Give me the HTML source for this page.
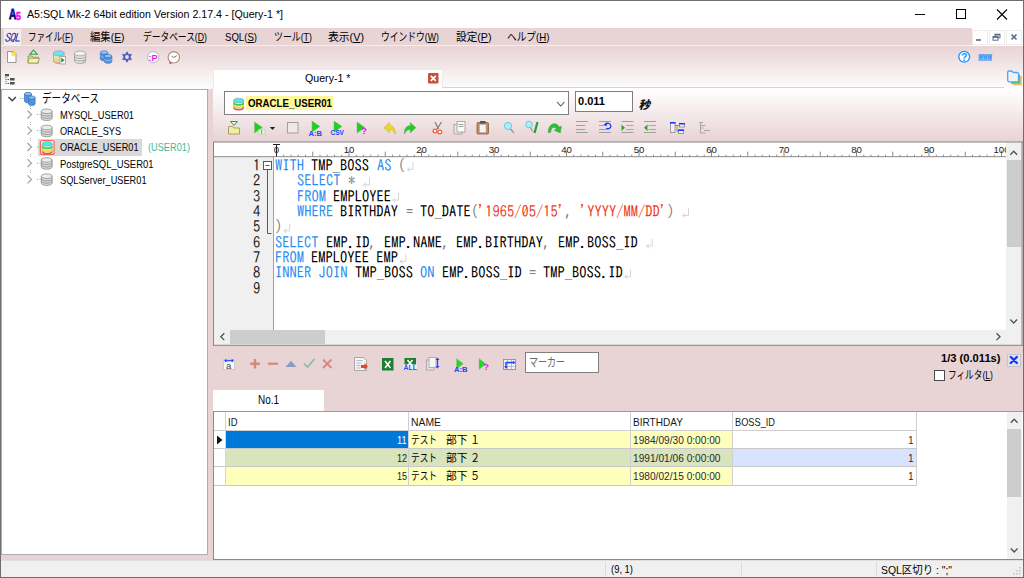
<!DOCTYPE html>
<html lang="ja">
<head>
<meta charset="utf-8">
<title>A5:SQL Mk-2</title>
<style>
*{box-sizing:border-box;margin:0;padding:0}
html,body{width:1024px;height:578px;overflow:hidden;background:#fff}
body{position:relative;font-family:"Liberation Sans","Noto Sans CJK JP",sans-serif;font-size:12px;color:#000}
.a{position:absolute}
.t{position:absolute;white-space:nowrap;line-height:16px;height:16px;font-size:12px}
svg{position:absolute;overflow:visible}
.ui{font-family:"Liberation Sans","Noto Sans CJK JP",sans-serif;margin-top:.8px}
.mono{font-family:"IPAGothic","Liberation Mono",monospace}
.c{font-size:15.600px;line-height:15px;height:15px;transform:scaleX(.9295);transform-origin:0 0}
u{text-decoration:underline;text-underline-offset:1px}
#win{left:0;top:0;width:1024px;height:578px;border:1px solid #6e6e6e;z-index:50;pointer-events:none}
#title{left:1px;top:1px;width:1022px;height:27px;background:#fff}
#menu{left:1px;top:28px;width:1022px;height:18px;background:#e8d3d5;border-bottom:1px solid #f6eeee}
#tool{left:1px;top:46px;width:1022px;height:43px;background:linear-gradient(#e8d3d5,#fefdfd)}
#main{left:1px;top:89px;width:1022px;height:471px;background:#e8d3d5}
#status{left:1px;top:560px;width:1022px;height:17px;background:#f0f0f0}
#tree{left:1px;top:89px;width:207px;height:466px;background:#fff;border:1px solid #a9adb6}
</style>
</head>
<body>
<div class="a" id="title"></div>
<div class="a" id="menu"></div>
<div class="a" id="tool"></div>
<div class="a" id="main"></div>
<div class="a" id="status"></div>
<div class="a" id="tree"></div>
<!-- title bar -->
<svg class="a" style="left:8px;top:7px" width="14" height="14" viewBox="0 0 14 14">
 <defs><linearGradient id="ga" x1="0" y1="0" x2="0" y2="1"><stop offset="0" stop-color="#0808ff"/><stop offset=".45" stop-color="#0a14c0"/><stop offset="1" stop-color="#000"/></linearGradient></defs>
 <text x=".9" y="11.800" font-family="Liberation Sans" font-weight="bold" font-size="15.400" fill="url(#ga)" stroke="url(#ga)" stroke-width=".9" textLength="7.300" lengthAdjust="spacingAndGlyphs">A</text>
 <text x="8" y="12.600" font-family="Liberation Sans" font-weight="bold" font-size="10.600" fill="#f010f0" stroke="#f010f0" stroke-width=".6" textLength="4.900" lengthAdjust="spacingAndGlyphs">5</text>
</svg>
<span class="t f sx" id="t_title" style="left:27px;top:5.800px;font-size:10.800px;color:#000;transform:scaleX(0.9866);transform-origin:0 0;">A5:SQL Mk-2 64bit edition Version 2.17.4 - [Query-1 *]</span>
<svg class="a" style="left:900px;top:1px" width="123" height="27" viewBox="0 0 123 27" fill="none" stroke="#000" stroke-width="1">
 <path d="M15 13.5h10"/>
 <rect x="56.5" y="8.5" width="9" height="9"/>
 <path d="M97 8.5l10 10M107 8.5l-10 10" stroke-width="1.1"/>
</svg>
<!-- menu bar -->
<div class="a" style="left:4px;top:29px;width:17px;height:16px;background:#f3eff0"></div>
<span class="t mono f" id="t_sqlico" style="left:4px;top:29px;font-size:12px;font-style:italic;color:#2a2aa8;letter-spacing:-1.000px;">SQL</span>
<span class="t ui f sx" id="m1" style="left:28px;top:28.300px;font-size:11.500px;transform:scaleX(0.7411);transform-origin:0 0;">ファイル(<u>F</u>)</span>
<span class="t ui f sx" id="m2" style="left:89.5px;top:28.300px;font-size:11.500px;transform:scaleX(0.8994);transform-origin:0 0;">編集(<u>E</u>)</span>
<span class="t ui f sx" id="m3" style="left:143px;top:28.300px;font-size:11.500px;transform:scaleX(0.7581);transform-origin:0 0;">データベース(<u>D</u>)</span>
<span class="t ui f sx" id="m4" style="left:225px;top:28.300px;font-size:11.500px;transform:scaleX(0.8342);transform-origin:0 0;">SQL(<u>S</u>)</span>
<span class="t ui f sx" id="m5" style="left:274px;top:28.300px;font-size:11.500px;transform:scaleX(0.7721);transform-origin:0 0;">ツール(<u>T</u>)</span>
<span class="t ui f sx" id="m6" style="left:328px;top:28.300px;font-size:11.500px;transform:scaleX(0.9385);transform-origin:0 0;">表示(<u>V</u>)</span>
<span class="t ui f sx" id="m7" style="left:380.5px;top:28.300px;font-size:11.500px;transform:scaleX(0.7627);transform-origin:0 0;">ウインドウ(<u>W</u>)</span>
<span class="t ui f sx" id="m8" style="left:455.5px;top:28.300px;font-size:11.500px;transform:scaleX(0.9255);transform-origin:0 0;">設定(<u>P</u>)</span>
<span class="t ui f sx" id="m9" style="left:506.5px;top:28.300px;font-size:11.500px;transform:scaleX(0.8416);transform-origin:0 0;">ヘルプ(<u>H</u>)</span>
<!-- MDI buttons -->
<div class="a" style="left:972px;top:28px;width:51px;height:17.500px;background:#fff"></div>
<div class="a" style="left:972px;top:30px;width:16px;height:15px;border:1px solid #f0eaea;background:#fff"></div>
<div class="a" style="left:989px;top:30px;width:16px;height:15px;border:1px solid #f0eaea;background:#fff"></div>
<div class="a" style="left:1006px;top:30px;width:16px;height:15px;border:1px solid #f0eaea;background:#fff"></div>
<svg class="a" style="left:971px;top:29px" width="52" height="17" viewBox="0 0 52 17" fill="none" stroke="#5a6b8c">
 <path d="M5 11h5" stroke-width="1.6"/>
 <rect x="24" y="5.2" width="5" height="3.6" stroke-width="1"/><path d="M24 5.8h5" stroke-width="1.4"/>
 <rect x="22" y="7.6" width="5" height="3.6" fill="#fff" stroke-width="1"/><path d="M22 8.2h5" stroke-width="1.4"/>
 <path d="M40.5 5.5l5 5M45.5 5.5l-5 5" stroke-width="1.7"/>
</svg>
<!-- main toolbar icons -->
<svg class="a" style="left:0;top:46px" width="200" height="44" viewBox="0 46 200 44">
 <!-- new doc -->
 <path d="M7.500 51.500h6l2.500 2.500v8.500h-8.500z" fill="#fdfdfd" stroke="#8e8e8e" stroke-width=".9"/>
 <path d="M13.800 50.800l.9 1.700 1.900.3-1.400 1.300.3 1.900-1.700-.9-1.700.9.300-1.900-1.400-1.300 1.900-.3z" fill="#ffe640" stroke="#e8c820" stroke-width=".5"/>
 <!-- open -->
 <path d="M28 56h4l1 1.300h5.500v5.700h-10.500z" fill="#e6e27a" stroke="#8a8a60" stroke-width=".8"/>
 <path d="M29.300 58.300h10.200l-1.800 4.700h-9.700z" fill="#f6f3a0" stroke="#8a8a60" stroke-width=".7"/>
 <path d="M29.800 54.300l3.700-4.300 3.700 4.300z" fill="#c8f0c8" stroke="#2ea040" stroke-width="1.100"/>
 <!-- db run -->
 <g>
  <path d="M53.500 53.500v7.500c0 1.400 2.400 2.500 5.300 2.500s5.300-1.100 5.300-2.500v-7.500z" fill="#d6e8b0" stroke="#8a9a8a" stroke-width=".7"/>
  <path d="M53.500 56.500c0 1.400 2.400 2.500 5.300 2.500s5.300-1.100 5.300-2.500v2.500c0 1.400-2.400 2.500-5.300 2.500s-5.300-1.100-5.300-2.500z" fill="#f0d070" opacity=".7"/>
  <path d="M53.500 59.500c0 1.400 2.400 2.500 5.300 2.500s5.300-1.100 5.300-2.500v1.500c0 1.400-2.400 2.500-5.300 2.500s-5.300-1.100-5.300-2.500z" fill="#f0a080" opacity=".7"/>
  <ellipse cx="58.800" cy="53.300" rx="5.300" ry="2.400" fill="#70e4f0" stroke="#80a0a0" stroke-width=".7"/>
  <rect x="60" y="56.500" width="5.500" height="7.500" fill="#f8f8f8" stroke="#909090" stroke-width=".7"/>
  <path d="M61.300 57.800l3.200 2.400-3.200 2.400z" fill="#188a28"/>
 </g>
 <!-- db gray -->
 <g fill="#e4e4e4" stroke="#9c9c9c" stroke-width=".8">
  <path d="M74.500 53.500v7.500c0 1.400 2.500 2.500 5.600 2.500s5.600-1.100 5.600-2.500v-7.500z"/>
  <ellipse cx="80.100" cy="53.500" rx="5.600" ry="2.400" fill="#f4f4f4"/>
  <path d="M74.500 56c0 1.400 2.500 2.500 5.600 2.500s5.600-1.100 5.600-2.500M74.500 58.500c0 1.400 2.500 2.500 5.600 2.500s5.600-1.100 5.600-2.500" fill="none"/>
  <path d="M82 60l3.500 3.500M85.500 60l-3.500 3.500" stroke="#b0b0b0" stroke-width=".8"/>
 </g>
 <!-- db blue pair -->
 <g fill="#4f8fe0" stroke="#3868b0" stroke-width=".6">
  <path d="M100.300 52.500v6.500c0 1 1.700 1.800 3.800 1.800s3.800-.8 3.800-1.800v-6.500z"/><ellipse cx="104.100" cy="52.500" rx="3.800" ry="1.700" fill="#90c4f8"/>
  <path d="M104.300 56v5.500c0 1 1.700 1.800 3.800 1.800s3.800-.8 3.800-1.800v-5.500z"/><ellipse cx="108.100" cy="56" rx="3.800" ry="1.600" fill="#90c4f8"/>
  <path d="M100.300 55.500c0 1 1.700 1.700 3.500 1.700M104.300 59c0 1 1.700 1.700 3.800 1.700s3.800-.7 3.800-1.700" fill="none" stroke="#a8d0f8" stroke-width=".7"/>
 </g>
 <!-- gear -->
 <g transform="translate(127 57)">
  <path d="M0-5.200l1.500 2.600h3l-1.500 2.600 1.500 2.600h-3l-1.500 2.600-1.500-2.600h-3l1.500-2.600-1.500-2.600h3z" fill="#4858b8" stroke="#4858b8" stroke-width=".7"/>
  <circle r="1.900" fill="#f0e2e3"/>
 </g>
 <!-- P -->
 <circle cx="153.200" cy="57.200" r="5.600" fill="#fff" stroke="#b4b4c4" stroke-width="1"/>
 <text x="148.600" y="60.600" font-family="Liberation Sans" font-weight="bold" font-size="9.500" fill="#f018e8" textLength="9" lengthAdjust="spacingAndGlyphs">:P</text>
 <!-- clock -->
 <circle cx="173.800" cy="57.300" r="5.700" fill="#fff" stroke="#b08878" stroke-width="1.100"/>
 <path d="M173.800 57.500l3-1.800M173.800 57.500l-2.300-1.300" stroke="#666" stroke-width=".9" fill="none"/>
 <path d="M169.500 62.800l1.800-.3-.6 1.500z" fill="#c04830" stroke="#c04830" stroke-width=".8"/>
 <!-- tree toolbar icon -->
 <g fill="#505050"><rect x="5" y="74" width="4" height="2.300"/><rect x="10" y="78" width="4.600" height="2.500"/><rect x="10" y="82" width="4.600" height="2.500"/><rect x="5.500" y="77" width="1" height="1"/><rect x="5.500" y="79" width="1" height="1"/><rect x="5.500" y="81" width="1" height="1"/><rect x="5.500" y="83" width="1" height="1"/><rect x="7.500" y="79" width="1.500" height="1"/><rect x="7.500" y="83" width="1.500" height="1"/></g>
</svg>
<!-- right toolbar icons -->
<svg class="a" style="left:950px;top:46px" width="74" height="44" viewBox="950 46 74 44">
 <circle cx="964.200" cy="56.800" r="5.400" fill="#fff" stroke="#1e90ff" stroke-width="1.300"/>
 <text x="961.100" y="60.700" font-family="Liberation Sans" font-weight="bold" font-size="10.500" fill="#1e90ff">?</text>
 <rect x="978.400" y="54.400" width="13.600" height="4.800" fill="#a8d4ff"/>
 <text x="978.400" y="59.300" font-family="Liberation Sans" font-weight="bold" font-size="6.500" fill="#1e80f0" textLength="13.600" lengthAdjust="spacingAndGlyphs">WWW</text>
 <path d="M978.400 60h13.600" stroke="#1e80f0" stroke-width="1"/>
 <!-- corner icon -->
 <path d="M1013 84.500h8v-8.500" stroke="#f0c048" stroke-width="1.600" fill="none"/>
 <path d="M1011 82.800h8.300v-8.300" stroke="#48d060" stroke-width="1.800" fill="none"/>
 <path d="M1007.700 72.500c0-1 .5-1.500 1.500-1.500h2.500l1.500 1.500h3.800c1 0 1.500.5 1.500 1.500v6.300c0 1-.5 1.500-1.500 1.500h-7.800c-1 0-1.500-.5-1.500-1.500z" fill="#f4f0f4" stroke="#48a8f4" stroke-width="1.300"/>
</svg>
<!-- tree -->
<div class="a" style="left:38px;top:139px;width:104px;height:17px;background:#d9d9d9"></div>
<svg class="a" style="left:0;top:89px" width="208" height="110" viewBox="0 89 208 110">
 <defs>
  <g id="dbg">
   <path d="M0 2.300v6.900c0 1.400 2.400 2.300 5.400 2.300s5.400-.9 5.400-2.300v-6.900z" fill="#dadada" stroke="#8c8c8c" stroke-width=".8"/>
   <path d="M0 4.700c0 1.400 2.400 2.300 5.400 2.300s5.400-.9 5.400-2.300M0 7c0 1.400 2.400 2.300 5.400 2.300s5.400-.9 5.400-2.300" fill="none" stroke="#8c8c8c" stroke-width=".8"/>
   <ellipse cx="5.400" cy="2.300" rx="5.400" ry="2.300" fill="#ececec" stroke="#8c8c8c" stroke-width=".8"/>
  </g>
  <path id="chev" d="M0 0l4 4-4 4" fill="none" stroke="#a0a0a0" stroke-width="1.200"/>
 </defs>
 <!-- dotted lines -->
 <g fill="#a8a8a8"><rect x="30" y="106" width="1" height="1"/><rect x="30" y="108" width="1" height="1"/><rect x="30" y="122" width="1" height="1"/><rect x="30" y="124" width="1" height="1"/><rect x="30" y="138" width="1" height="1"/><rect x="30" y="140" width="1" height="1"/><rect x="30" y="154" width="1" height="1"/><rect x="30" y="156" width="1" height="1"/><rect x="30" y="170" width="1" height="1"/><rect x="30" y="172" width="1" height="1"/></g>
 <g stroke="#9a9a9a" stroke-width="1" stroke-dasharray="1 1.500" fill="none">
  <path d="M20 98.500h4M37 114.500h4M37 130.700h4M37 147h4M37 163.200h4M37 179.400h4"/>
 </g>
 <!-- root chevron -->
 <path d="M8.500 97l3.700 3.800 3.700-3.800" fill="none" stroke="#404040" stroke-width="1.400"/>
 <!-- root icon: blue dbs -->
 <g fill="#4f94e0" stroke="#3a6fb8" stroke-width=".7">
  <path d="M24.500 94v7c0 1.100 1.600 1.800 3.500 1.800s3.500-.7 3.500-1.800v-7z"/><ellipse cx="28" cy="94" rx="3.500" ry="1.700" fill="#8fc0f4"/>
  <path d="M28.500 97.500v6.300c0 1 1.500 1.700 3.300 1.700s3.300-.7 3.300-1.700v-6.300z"/><ellipse cx="31.800" cy="97.500" rx="3.300" ry="1.500" fill="#8fc0f4"/>
 </g>
 <use href="#chev" x="27.500" y="110.500"/>
 <use href="#chev" x="27.500" y="126.700"/>
 <use href="#chev" x="27.500" y="143"/>
 <use href="#chev" x="27.500" y="159.200"/>
 <use href="#chev" x="27.500" y="175.400"/>
 <use href="#dbg" x="41.300" y="109"/>
 <use href="#dbg" x="41.300" y="125.200"/>
 <use href="#dbg" x="41.300" y="157.700"/>
 <use href="#dbg" x="41.300" y="173.900"/>
 <!-- selected colorful db -->
 <rect x="40.400" y="140.500" width="13.700" height="14" rx="2" fill="#fff4f0" stroke="#f46a4a" stroke-width="1.200"/>
 <g id="dbc">
  <path d="M42.300 143.800v8c0 1.300 2.200 2.200 4.900 2.200s4.900-.9 4.900-2.200v-8z" fill="#ececec" stroke="#8a8a8a" stroke-width=".7"/>
  <path d="M42.600 146.200c0 1.300 2.100 2.100 4.600 2.100s4.600-.8 4.600-2.100" fill="none" stroke="#38d048" stroke-width="1.800"/>
  <path d="M42.600 148.900c0 1.300 2.100 2.100 4.600 2.100s4.600-.8 4.600-2.100" fill="none" stroke="#f0dc28" stroke-width="1.700"/>
  <path d="M42.600 151.400c0 1.300 2.100 2.100 4.600 2.100s4.600-.8 4.600-2.100" fill="none" stroke="#f05838" stroke-width="1.600"/>
  <ellipse cx="47.200" cy="143.800" rx="4.900" ry="2.300" fill="#48e8f0" stroke="#8aa0a0" stroke-width=".6"/>
 </g>
</svg>
<span class="t ui f sx" id="tr0" style="left:41.500px;top:90.300px;font-size:12.500px;transform:scaleX(0.7662);transform-origin:0 0;">データベース</span>
<span class="t f sx" id="tr1" style="left:59.500px;top:106.80px;font-size:11.600px;transform:scaleX(0.8030);transform-origin:0 0;">MYSQL_USER01</span>
<span class="t f sx" id="tr2" style="left:59.500px;top:123.00px;font-size:11.600px;transform:scaleX(0.7888);transform-origin:0 0;">ORACLE_SYS</span>
<span class="t f sx" id="tr3" style="left:59.500px;top:139.30px;font-size:11.600px;transform:scaleX(0.7911);transform-origin:0 0;">ORACLE_USER01</span>
<span class="t f sx" id="tr3b" style="left:148px;top:139.30px;font-size:11.600px;color:#40b8a0;transform:scaleX(0.7948);transform-origin:0 0;">(USER01)</span>
<span class="t f sx" id="tr4" style="left:59.500px;top:155.50px;font-size:11.600px;transform:scaleX(0.8150);transform-origin:0 0;">PostgreSQL_USER01</span>
<span class="t f sx" id="tr5" style="left:59.500px;top:171.70px;font-size:11.600px;transform:scaleX(0.7943);transform-origin:0 0;">SQLServer_USER01</span>
<!-- query tab + panel -->
<div class="a" style="left:213px;top:87px;width:791px;height:1px;background:#d9d4d4"></div>
<div class="a" style="left:213px;top:88px;width:810px;height:54px;background:linear-gradient(#ffffff 0px,#fefdfd 3px,#e8d3d5 53px)"></div>
<div class="a" style="left:213px;top:69px;width:230px;height:20px;background:#fff;border:1px solid #efe9e9;border-bottom:none"></div>
<span class="t f sx" id="q_tab" style="left:304.500px;top:70.200px;font-size:10.600px;transform:scaleX(1.0034);transform-origin:0 0;">Query-1 *</span>
<svg class="a" style="left:428px;top:73px" width="11" height="11" viewBox="0 0 11 11">
 <rect x="0" y="0" width="10.500" height="10.500" rx="1" fill="#c8503c"/>
 <path d="M2.800 2.800l5 5M7.800 2.800l-5 5" stroke="#fff" stroke-width="1.700" fill="none"/>
</svg>
<!-- combo -->
<div class="a" style="left:224px;top:91px;width:345px;height:24px;background:#fff;border:1px solid #7f7f7f"></div>
<div class="a" style="left:246px;top:96px;width:87px;height:13.500px;background:#fff799"></div>
<svg class="a" style="left:233px;top:97px" width="13" height="14" viewBox="0 0 13 14">
 <path d="M.8 3.500v7.300c0 1.300 2.200 2.200 4.900 2.200s4.900-.9 4.900-2.200v-7.300z" fill="#ececec" stroke="#8a8a8a" stroke-width=".7"/>
 <path d="M1.100 5.700c0 1.300 2.100 2.100 4.600 2.100s4.600-.8 4.600-2.100" fill="none" stroke="#38d048" stroke-width="1.700"/>
 <path d="M1.100 8.200c0 1.300 2.100 2.100 4.600 2.100s4.600-.8 4.600-2.100" fill="none" stroke="#f0dc28" stroke-width="1.600"/>
 <path d="M1.100 10.500c0 1.300 2.100 2.100 4.600 2.100s4.600-.8 4.600-2.100" fill="none" stroke="#f05838" stroke-width="1.500"/>
 <ellipse cx="5.700" cy="3.500" rx="4.900" ry="2.300" fill="#48e8f0" stroke="#8aa0a0" stroke-width=".6"/>
</svg>
<span class="t f sx" id="q_combo" style="left:247.500px;top:94.700px;font-size:10.800px;font-weight:bold;transform:scaleX(0.8973);transform-origin:0 0;">ORACLE_USER01</span>
<svg class="a" style="left:556px;top:101px" width="10" height="7" viewBox="0 0 10 7"><path d="M1 1l3.700 4 3.700-4" fill="none" stroke="#555" stroke-width="1.100"/></svg>
<!-- time box -->
<div class="a" style="left:575px;top:91px;width:58px;height:21px;background:#fff;border:1px solid #7f7f7f"></div>
<span class="t f sx" id="q_time" style="left:578px;top:93.300px;font-size:11px;font-weight:bold;transform:scaleX(1.0029);transform-origin:0 0;">0.011</span>
<span class="t ui" style="left:638.500px;top:96.300px;font-size:11.500px;font-weight:900;font-style:italic;color:#111">秒</span>
<!-- sql toolbar icons -->
<svg class="a" style="left:213px;top:116px" width="520" height="24" viewBox="213 116 520 24">
 <defs>
  <path id="gtri" d="M0 0v11l8-5.500z" fill="#20d020" stroke="#7ab87a" stroke-width=".5"/>
  <g id="lines3" stroke="#a0a0a0" stroke-width="1" fill="none"><path d="M0 .5h12M0 11.500h12"/></g>
 </defs>
 <!-- folder with down arrow -->
 <path d="M228.500 126.500h4l1 1.500h6v6h-11z" fill="#f1ee9c" stroke="#8f8f6a" stroke-width=".8"/>
 <path d="M230.500 121.500h7l-3.500 4z" fill="#e6f7e0" stroke="#2e9e3a" stroke-width="1"/>
 <!-- run -->
 <use href="#gtri" x="254.500" y="122"/>
 <rect x="258.500" y="129.500" width="6.500" height="5" fill="#dff5d8" stroke="#a8c8a0" stroke-width=".5"/><path d="M261.700 130.500v3" stroke="#333" stroke-width="1" stroke-dasharray="1 1"/>
 <path d="M269.800 127h5.400l-2.700 3z" fill="#222"/>
 <rect x="287.500" y="122.500" width="10.500" height="10.500" fill="#f3e8e9" stroke="#a0a0a0" stroke-width="1"/>
 <use href="#gtri" x="312" y="121"/>
 <text x="308.500" y="135.500" font-family="Liberation Sans" font-weight="bold" font-size="7.500" fill="#1848ff" textLength="13.500" lengthAdjust="spacingAndGlyphs">A:B</text>
 <use href="#gtri" x="334" y="121"/>
 <text x="330.500" y="135" font-family="Liberation Sans" font-weight="bold" font-size="7.500" fill="#1848ff" textLength="13.500" lengthAdjust="spacingAndGlyphs">CSV</text>
 <use href="#gtri" x="357" y="122"/>
 <text x="361.300" y="134" font-family="Liberation Sans" font-weight="bold" font-size="9.500" fill="#f010f0">?</text>
 <!-- yellow back arrow -->
 <path d="M384 127.700l5.500-5v3c4.300 0 5.800 3 5.800 8.300-1.300-3.200-2.800-4.600-5.800-4.600v3.300z" fill="#f0d820" stroke="#c8b030" stroke-width=".6"/>
 <!-- green forward arrow -->
 <path d="M415.800 127.700l-5.500-5v3c-4.300 0-5.800 3-5.800 8.300 1.300-3.200 2.800-4.600 5.800-4.600v3.300z" fill="#20d020" stroke="#50a850" stroke-width=".6"/>
 <!-- scissors -->
 <path d="M435 122l3.500 7M441.500 122l-4.500 7" stroke="#777" stroke-width="1.100" fill="none"/>
 <circle cx="435" cy="131" r="1.900" fill="#fff" stroke="#f05a3c" stroke-width="1.200"/><circle cx="439.800" cy="132" r="1.900" fill="#fff" stroke="#f05a3c" stroke-width="1.200"/>
 <!-- copy -->
 <rect x="454" y="124.500" width="8" height="9.500" fill="#e8e8e8" stroke="#9a9a9a" stroke-width=".8"/>
 <rect x="457" y="121.500" width="8" height="10.500" fill="#fafafa" stroke="#9a9a9a" stroke-width=".8"/>
 <path d="M458.500 124.500h5M458.500 126.500h5" stroke="#888" stroke-width=".8"/>
 <!-- paste -->
 <rect x="477" y="122.500" width="11.500" height="11.500" rx="1" fill="#c08a60" stroke="#8a5a3a" stroke-width=".8"/>
 <rect x="479.500" y="124.500" width="6.500" height="8" fill="#f4f4f4" stroke="#aaa" stroke-width=".5"/>
 <rect x="480" y="121" width="5.500" height="2.500" fill="#555"/>
 <!-- search -->
 <circle cx="508" cy="126" r="3.600" fill="#a8f0f8" stroke="#70c8d8" stroke-width="1"/><path d="M510.500 129l3.500 4" stroke="#999" stroke-width="1.400"/>
 <!-- search + pen -->
 <circle cx="529" cy="124.500" r="3.300" fill="#a8f0f8" stroke="#70c8d8" stroke-width="1"/><path d="M530.500 127.500l2 4" stroke="#999" stroke-width="1.200"/>
 <path d="M537.500 122l-3 11" stroke="#2a9a3a" stroke-width="2.200"/>
 <!-- curved green arrow -->
 <path d="M548.300 132.500c0-5 2.500-8.700 6-8.700 2.500 0 4 1.500 5 3.500l2-1-1 6.500-6-2.500 2.200-1.200c-.7-1.200-1.500-1.800-2.500-1.800-2 0-3.200 2.200-3.500 5.200z" fill="#20c828" stroke="#5a8a5a" stroke-width=".6"/>
 <!-- lines -->
 <use href="#lines3" x="576" y="121"/><path d="M576 125.500h9M576 129.500h9" stroke="#80b880" stroke-width="1"/>
 <use href="#lines3" x="599" y="121"/><path d="M599 125.500h8M599 129.500h8" stroke="#80b880" stroke-width="1"/>
 <path d="M605 124.500c2-2 5.500-1.500 5.800 1.200.3 2.500-2.500 3.800-4.500 2.500" stroke="#1838ff" stroke-width="1.300" fill="none"/><path d="M603.500 124.200l3.200-1v3z" fill="#1838ff"/>
 <use href="#lines3" x="621.500" y="121"/><path d="M626 125.500h7.500M626 129.500h7.500" stroke="#a8a8a8" stroke-width="1"/><path d="M621.500 124.500v6.500l3.500-3.200z" fill="#20b020"/>
 <use href="#lines3" x="644" y="121"/><path d="M648.500 125.500h7.500M648.500 129.500h7.500" stroke="#a8a8a8" stroke-width="1"/><path d="M647.500 124.500v6.500l-3.500-3.200z" fill="#20b020"/>
 <!-- ER icon -->
 <rect x="670.500" y="122.500" width="4.500" height="10" fill="#f0f0f0" stroke="#888" stroke-width=".8"/><rect x="670" y="122" width="5.500" height="1.600" fill="#1838ff"/>
 <rect x="679.500" y="123.500" width="5" height="3.500" fill="#f0f0f0" stroke="#888" stroke-width=".8"/><rect x="679" y="123" width="6" height="1.500" fill="#1838ff"/>
 <rect x="678.500" y="130" width="5" height="3.500" fill="#f0f0f0" stroke="#888" stroke-width=".8"/><rect x="678" y="129.500" width="6" height="1.500" fill="#1838ff"/>
 <path d="M675 125.500h4.500M677 125.500v6h1.500" stroke="#b06040" stroke-width=".7" fill="none"/>
 <!-- gray tree icon -->
 <g stroke="#a8a8a8" stroke-width="1" fill="none"><path d="M699 122.500h4M700.500 123v10.500M700.500 125.500h5M700.500 128h3M704 130.500h6M700.500 133h5"/></g>
</svg>
<!-- editor -->
<div class="a" style="left:214px;top:142px;width:808px;height:203px;background:#fff"></div>
<div class="a" style="left:214px;top:157px;width:59px;height:173px;background:#f0f0f0"></div>
<svg class="a" style="left:0;top:141px" width="1024" height="16" viewBox="0 141 1024 16"><path d="M276.50 150.70v6M283.75 154.70v2M291.00 154.70v2M298.25 154.70v2M305.50 154.70v2M312.75 151.70v5M320.00 154.70v2M327.25 154.70v2M334.50 154.70v2M341.75 154.70v2M349.00 150.70v6M356.25 154.70v2M363.50 154.70v2M370.75 154.70v2M378.00 154.70v2M385.25 151.70v5M392.50 154.70v2M399.75 154.70v2M407.00 154.70v2M414.25 154.70v2M421.50 150.70v6M428.75 154.70v2M436.00 154.70v2M443.25 154.70v2M450.50 154.70v2M457.75 151.70v5M465.00 154.70v2M472.25 154.70v2M479.50 154.70v2M486.75 154.70v2M494.00 150.70v6M501.25 154.70v2M508.50 154.70v2M515.75 154.70v2M523.00 154.70v2M530.25 151.70v5M537.50 154.70v2M544.75 154.70v2M552.00 154.70v2M559.25 154.70v2M566.50 150.70v6M573.75 154.70v2M581.00 154.70v2M588.25 154.70v2M595.50 154.70v2M602.75 151.70v5M610.00 154.70v2M617.25 154.70v2M624.50 154.70v2M631.75 154.70v2M639.00 150.70v6M646.25 154.70v2M653.50 154.70v2M660.75 154.70v2M668.00 154.70v2M675.25 151.70v5M682.50 154.70v2M689.75 154.70v2M697.00 154.70v2M704.25 154.70v2M711.50 150.70v6M718.75 154.70v2M726.00 154.70v2M733.25 154.70v2M740.50 154.70v2M747.75 151.70v5M755.00 154.70v2M762.25 154.70v2M769.50 154.70v2M776.75 154.70v2M784.00 150.70v6M791.25 154.70v2M798.50 154.70v2M805.75 154.70v2M813.00 154.70v2M820.25 151.70v5M827.50 154.70v2M834.75 154.70v2M842.00 154.70v2M849.25 154.70v2M856.50 150.70v6M863.75 154.70v2M871.00 154.70v2M878.25 154.70v2M885.50 154.70v2M892.75 151.70v5M900.00 154.70v2M907.25 154.70v2M914.50 154.70v2M921.75 154.70v2M929.00 150.70v6M936.25 154.70v2M943.50 154.70v2M950.75 154.70v2M958.00 154.70v2M965.25 151.70v5M972.50 154.70v2M979.75 154.70v2M987.00 154.70v2M994.25 154.70v2M1001.50 150.70v6" stroke="#8a8a8a" stroke-width="1" fill="none"/></svg>
<div class="a" style="left:214px;top:142px;width:792px;height:14px;overflow:hidden">
<span class="t" style="left:62.50px;top:1.500px;width:30px;margin-left:-15px;text-align:center;font-size:9.600px;line-height:12px;height:12px;color:#222">0</span>
<span class="t" style="left:135.00px;top:1.500px;width:30px;margin-left:-15px;text-align:center;font-size:9.600px;line-height:12px;height:12px;color:#222">10</span>
<span class="t" style="left:207.50px;top:1.500px;width:30px;margin-left:-15px;text-align:center;font-size:9.600px;line-height:12px;height:12px;color:#222">20</span>
<span class="t" style="left:280.00px;top:1.500px;width:30px;margin-left:-15px;text-align:center;font-size:9.600px;line-height:12px;height:12px;color:#222">30</span>
<span class="t" style="left:352.50px;top:1.500px;width:30px;margin-left:-15px;text-align:center;font-size:9.600px;line-height:12px;height:12px;color:#222">40</span>
<span class="t" style="left:425.00px;top:1.500px;width:30px;margin-left:-15px;text-align:center;font-size:9.600px;line-height:12px;height:12px;color:#222">50</span>
<span class="t" style="left:497.50px;top:1.500px;width:30px;margin-left:-15px;text-align:center;font-size:9.600px;line-height:12px;height:12px;color:#222">60</span>
<span class="t" style="left:570.00px;top:1.500px;width:30px;margin-left:-15px;text-align:center;font-size:9.600px;line-height:12px;height:12px;color:#222">70</span>
<span class="t" style="left:642.50px;top:1.500px;width:30px;margin-left:-15px;text-align:center;font-size:9.600px;line-height:12px;height:12px;color:#222">80</span>
<span class="t" style="left:715.00px;top:1.500px;width:30px;margin-left:-15px;text-align:center;font-size:9.600px;line-height:12px;height:12px;color:#222">90</span>
<span class="t" style="left:787.50px;top:1.500px;width:30px;margin-left:-15px;text-align:center;font-size:9.600px;line-height:12px;height:12px;color:#222">100</span>
</div>
<div class="a" style="left:1006px;top:142px;width:16px;height:203px;background:#f0f0f0"></div>
<div class="a" style="left:1007px;top:160px;width:13.500px;height:87px;background:#cdcdcd"></div>
<div class="a" style="left:214px;top:330px;width:792px;height:15px;background:#f0f0f0"></div>
<div class="a" style="left:230px;top:330px;width:95px;height:14px;background:#cdcdcd"></div>
<svg class="a" style="left:0;top:141px" width="1024" height="206" viewBox="0 141 1024 206" fill="none" stroke="#505050" stroke-width="1.300"><g stroke="#858585" stroke-width="1"><path d="M213 142h810M213.500 142v203.500M213 345.300h810M1022 142v203"/><path d="M214 156.700h792" stroke="#8a8a8a"/><path d="M273.500 157v173" stroke="#a0a0a0"/></g><path d="M1010.300 154.800l3.400-3.500 3.400 3.500"/><path d="M1010.300 319.500l3.400 3.500 3.400-3.500"/><path d="M224.300 333.300l-3.500 3.400 3.500 3.400"/><path d="M996.500 333.300l3.500 3.400-3.500 3.400"/><g stroke="#5a5a5a" stroke-width="1"><rect x="263.500" y="161.500" width="8" height="8" fill="#fff"/><path d="M265.500 165.500h4"/><path d="M267.500 170v63.500h4"/></g></svg>
<span class="t mono c" style="left:252.80px;top:157.90px;color:#222">1</span>
<span class="t mono c" style="left:275.00px;top:157.90px;color:#2b8cf2">WITH</span>
<span class="t mono c" style="left:311.25px;top:157.90px;color:#000">TMP_BOSS</span>
<span class="t mono c" style="left:376.50px;top:157.90px;color:#2b8cf2">AS</span>
<span class="t mono c" style="left:398.25px;top:157.90px;color:#808080">(</span>
<span class="t mono c" style="left:252.80px;top:173.25px;color:#222">2</span>
<span class="t mono c" style="left:296.75px;top:173.25px;color:#2b8cf2">SELECT</span>
<span class="t mono c" style="left:347.50px;top:173.25px;color:#808080">*</span>
<span class="t mono c" style="left:252.80px;top:188.60px;color:#222">3</span>
<span class="t mono c" style="left:296.75px;top:188.60px;color:#2b8cf2">FROM</span>
<span class="t mono c" style="left:333.00px;top:188.60px;color:#000">EMPLOYEE</span>
<span class="t mono c" style="left:252.80px;top:203.95px;color:#222">4</span>
<span class="t mono c" style="left:296.75px;top:203.95px;color:#2b8cf2">WHERE</span>
<span class="t mono c" style="left:340.25px;top:203.95px;color:#000">BIRTHDAY</span>
<span class="t mono c" style="left:405.50px;top:203.95px;color:#808080">=</span>
<span class="t mono c" style="left:420.00px;top:203.95px;color:#000">TO_DATE</span>
<span class="t mono c" style="left:470.75px;top:203.95px;color:#808080">(</span>
<span class="t mono c" style="left:478.00px;top:203.95px;color:#f03a1a">&#39;1965/05/15&#39;</span>
<span class="t mono c" style="left:565.00px;top:203.95px;color:#808080">,</span>
<span class="t mono c" style="left:579.50px;top:203.95px;color:#f03a1a">&#39;YYYY/MM/DD&#39;</span>
<span class="t mono c" style="left:666.50px;top:203.95px;color:#808080">)</span>
<span class="t mono c" style="left:252.80px;top:219.30px;color:#222">5</span>
<span class="t mono c" style="left:275.00px;top:219.30px;color:#808080">)</span>
<span class="t mono c" style="left:252.80px;top:234.65px;color:#222">6</span>
<span class="t mono c" style="left:275.00px;top:234.65px;color:#2b8cf2">SELECT</span>
<span class="t mono c" style="left:325.75px;top:234.65px;color:#000">EMP.ID</span>
<span class="t mono c" style="left:369.25px;top:234.65px;color:#808080">,</span>
<span class="t mono c" style="left:383.75px;top:234.65px;color:#000">EMP.NAME</span>
<span class="t mono c" style="left:441.75px;top:234.65px;color:#808080">,</span>
<span class="t mono c" style="left:456.25px;top:234.65px;color:#000">EMP.BIRTHDAY</span>
<span class="t mono c" style="left:543.25px;top:234.65px;color:#808080">,</span>
<span class="t mono c" style="left:557.75px;top:234.65px;color:#000">EMP.BOSS_ID</span>
<span class="t mono c" style="left:252.80px;top:250.00px;color:#222">7</span>
<span class="t mono c" style="left:275.00px;top:250.00px;color:#2b8cf2">FROM</span>
<span class="t mono c" style="left:311.25px;top:250.00px;color:#000">EMPLOYEE EMP</span>
<span class="t mono c" style="left:252.80px;top:265.35px;color:#222">8</span>
<span class="t mono c" style="left:275.00px;top:265.35px;color:#2b8cf2">INNER JOIN</span>
<span class="t mono c" style="left:354.75px;top:265.35px;color:#000">TMP_BOSS</span>
<span class="t mono c" style="left:420.00px;top:265.35px;color:#2b8cf2">ON</span>
<span class="t mono c" style="left:441.75px;top:265.35px;color:#000">EMP.BOSS_ID</span>
<span class="t mono c" style="left:528.75px;top:265.35px;color:#808080">=</span>
<span class="t mono c" style="left:543.25px;top:265.35px;color:#000">TMP_BOSS.ID</span>
<span class="t mono c" style="left:252.80px;top:280.70px;color:#222">9</span>
<svg class="a" style="left:0;top:141px" width="1024" height="206" viewBox="0 141 1024 206"><path d="M413.00 162.20v7.200h-5.800M409.80 167.40l-2.600 2 2.600 2M369.50 177.55v7.200h-5.800M366.30 182.75l-2.600 2 2.600 2M398.50 192.90v7.200h-5.800M395.30 198.10l-2.600 2 2.600 2M688.50 208.25v7.200h-5.800M685.30 213.45l-2.600 2 2.600 2M289.75 223.60v7.200h-5.800M286.55 228.80l-2.600 2 2.600 2M652.25 238.95v7.200h-5.800M649.05 244.15l-2.600 2 2.600 2M405.75 254.30v7.200h-5.800M402.55 259.50l-2.600 2 2.600 2M630.50 269.65v7.200h-5.800M627.30 274.85l-2.600 2 2.600 2" fill="none" stroke="#d6d6d6" stroke-width="1"/><path d="M273 144.500h7M276.500 144.500v12" fill="none" stroke="#222" stroke-width="1"/></svg>
<!-- result toolbar -->
<svg class="a" style="left:213px;top:346px" width="420" height="44" viewBox="213 346 420 44">
 <!-- a icon -->
 <rect x="223.500" y="359.500" width="11" height="10" fill="#f8f8f8" stroke="#c4c4c4" stroke-width=".8"/>
 <path d="M225.500 360.700h7" stroke="#1848ff" stroke-width="1.200"/><path d="M226.300 358.800l-2.300 1.900 2.300 1.900zM231.700 358.800l2.300 1.900-2.300 1.900z" fill="#1848ff"/>
 <text x="226" y="369.300" font-family="Liberation Sans" font-size="9.500" fill="#444">a</text>
 <!-- plus minus tri check x -->
 <path d="M255 359v9.500M250.300 363.700h9.500" stroke="#d88878" stroke-width="2.400"/>
 <path d="M268 363.700h10" stroke="#d88878" stroke-width="2.200"/>
 <path d="M285.500 367l5.500-6.300 5.500 6.300z" fill="#8a9cc4"/>
 <path d="M304 363.500l3.500 3.800 6.800-8.300" fill="none" stroke="#88bca8" stroke-width="1.700"/>
 <path d="M323 359.500l8.500 8.500M331.500 359.500l-8.500 8.500" fill="none" stroke="#d88878" stroke-width="1.800"/>
 <!-- doc export -->
 <path d="M354.500 357.500h9l3 3v10h-12z" fill="#f4f4f4" stroke="#a0a0a0" stroke-width=".9"/>
 <path d="M356.500 360.500h6M356.500 363h5M356.500 365.500h4M356.500 368h4" stroke="#b0b0b0" stroke-width=".9"/>
 <path d="M361 365h3.500v-2l3.500 3.500-3.500 3.500v-2h-3.500z" fill="#f04028"/>
 <!-- excel -->
 <rect x="382" y="358" width="11.500" height="12.500" fill="#1e7e34"/>
 <path d="M385 361l5.500 7M390.500 361l-5.500 7" stroke="#fff" stroke-width="1.600"/>
 <rect x="404.500" y="358" width="11.500" height="9" fill="#1e7e34"/>
 <path d="M407.500 360l5 6M412.500 360l-5 6" stroke="#fff" stroke-width="1.500"/>
 <rect x="403.500" y="364.500" width="13.500" height="5.500" fill="#e8f0ff"/>
 <text x="403.500" y="370" font-family="Liberation Sans" font-weight="bold" font-size="6.500" fill="#1848ff" textLength="13.500" lengthAdjust="spacingAndGlyphs">ALL</text>
 <!-- copy + arrows -->
 <rect x="426.500" y="360" width="7.500" height="10" fill="#e4e4e4" stroke="#a0a0a0" stroke-width=".8"/>
 <rect x="429" y="357.500" width="7" height="10" fill="#f6f6f6" stroke="#a0a0a0" stroke-width=".8"/>
 <path d="M437.500 359v8" stroke="#1848ff" stroke-width="1.200"/><path d="M435.500 360l2-2.500 2 2.500zM435.500 366l2 2.500 2-2.500z" fill="#1848ff"/>
 <!-- run A:B -->
 <path d="M456.500 358.500v10.500l6.800-5.200z" fill="#28d428" stroke="#8ac08a" stroke-width=".5"/>
 <text x="454" y="372" font-family="Liberation Sans" font-weight="bold" font-size="7.500" fill="#1848ff" textLength="13.500" lengthAdjust="spacingAndGlyphs">A:B</text>
 <!-- run ? -->
 <path d="M479 358.500v11l7-5.500z" fill="#28d428" stroke="#8ac08a" stroke-width=".5"/>
 <text x="483.500" y="370.300" font-family="Liberation Sans" font-weight="bold" font-size="9" fill="#f010f0">?</text>
 <!-- grid icon -->
 <rect x="503.500" y="359.500" width="12" height="10" fill="#f4f4f4" stroke="#909090" stroke-width=".9"/>
 <path d="M503.500 363h12M503.500 366.500h12M507.500 359.500v10M511.500 359.500v10" stroke="#a8a8a8" stroke-width=".7"/>
 <path d="M506 362.500h8M506 362.500v5" stroke="#1848ff" stroke-width="1.500" fill="none"/><path d="M504.300 366.500h3.400l-1.700 2.500zM513 360.700v3.600l2.500-1.800z" fill="#1848ff"/>
</svg>
<div class="a" style="left:525px;top:352px;width:74px;height:21px;background:#fff;border:1px solid #808080"></div>
<span class="t ui f sx" id="r_marker" style="left:528.500px;top:354px;color:#6a6a6a;transform:scaleX(0.7498);transform-origin:0 0;">マーカー</span>
<span class="t f sx" id="r_cnt" style="left:941px;top:349.800px;font-size:11.300px;font-weight:bold;transform:scaleX(0.9868);transform-origin:0 0;">1/3 (0.011s)</span>
<div class="a" style="left:1007px;top:353.500px;width:13.500px;height:13.500px;background:#e2e2e6;border:1px solid #c4c6cc"></div>
<svg class="a" style="left:1007px;top:353px" width="14" height="14" viewBox="0 0 14 14"><path d="M3.800 4l6 6M9.800 4l-6 6" stroke="#1838f0" stroke-width="2.400" stroke-linecap="round"/></svg>
<div class="a" style="left:933.500px;top:369.500px;width:11.500px;height:11.500px;background:#fff;border:1px solid #4a4a4a"></div>
<span class="t ui f sx" id="r_filter" style="left:948px;top:366.600px;font-size:11.500px;transform:scaleX(0.7518);transform-origin:0 0;">フィルタ(<u>L</u>)</span>
<!-- result tab -->
<div class="a" style="left:213px;top:390px;width:111px;height:21px;background:#fff"></div>
<span class="t f sx" id="r_tab" style="left:257.500px;top:391.700px;transform:scaleX(0.8281);transform-origin:0 0;">No.1</span>
<!-- grid -->
<div class="a" style="left:213px;top:411px;width:810px;height:149px;background:#fff;border-top:1px solid #9a9a9a;border-left:1px solid #8a8a8a"></div>
<div class="a" style="left:214px;top:430px;width:703px;height:1px;background:#d0d0d0"></div>
<!-- rows bg -->
<div class="a" style="left:226px;top:431px;width:183px;height:18px;background:#0078d7"></div>
<div class="a" style="left:409px;top:431px;width:324px;height:18px;background:#ffffbc"></div>
<div class="a" style="left:226px;top:449px;width:507px;height:18px;background:#d7e4bc"></div>
<div class="a" style="left:733px;top:449px;width:184px;height:18px;background:#d8e4ff"></div>
<div class="a" style="left:226px;top:467px;width:507px;height:18px;background:#ffffbc"></div>
<!-- grid lines -->
<div class="a" style="left:214px;top:448px;width:703px;height:1px;background:#c8c8c8"></div>
<div class="a" style="left:214px;top:466px;width:703px;height:1px;background:#c8c8c8"></div>
<div class="a" style="left:214px;top:485px;width:703px;height:1px;background:#c8c8c8"></div>
<div class="a" style="left:225px;top:412px;width:1px;height:74px;background:#d4d4d4"></div>
<div class="a" style="left:408px;top:412px;width:1px;height:74px;background:#d0d0d0"></div>
<div class="a" style="left:630px;top:412px;width:1px;height:74px;background:#d0d0d0"></div>
<div class="a" style="left:732px;top:412px;width:1px;height:74px;background:#d0d0d0"></div>
<div class="a" style="left:916px;top:412px;width:1px;height:74px;background:#d0d0d0"></div>
<svg class="a" style="left:216px;top:435px" width="8" height="10" viewBox="0 0 8 10"><path d="M1 .5v9l5.500-4.500z" fill="#111"/></svg>
<!-- headers -->
<span class="t f sx" id="g_h1" style="left:227.500px;top:414px;font-size:11.300px;color:#1a1a1a;transform:scaleX(0.8398);transform-origin:0 0;">ID</span>
<span class="t f sx" id="g_h2" style="left:411px;top:414px;font-size:11.300px;color:#1a1a1a;transform:scaleX(0.9191);transform-origin:0 0;">NAME</span>
<span class="t f sx" id="g_h3" style="left:633px;top:414px;font-size:11.300px;color:#1a1a1a;transform:scaleX(0.8916);transform-origin:0 0;">BIRTHDAY</span>
<span class="t f sx" id="g_h4" style="left:735px;top:414px;font-size:11.300px;color:#1a1a1a;transform:scaleX(0.8166);transform-origin:0 0;">BOSS_ID</span>
<!-- cells -->
<span class="t f sx" id="g_i1" style="left:396.500px;top:431.500px;color:#fff;font-size:11px;transform:scaleX(0.8317);transform-origin:0 0;">11</span>
<span class="t f sx" id="g_i2" style="left:396.500px;top:449.700px;color:#222;font-size:11px;transform:scaleX(0.8163);transform-origin:0 0;">12</span>
<span class="t f sx" id="g_i3" style="left:396.500px;top:467.500px;color:#222;font-size:11px;transform:scaleX(0.8163);transform-origin:0 0;">15</span>
<span class="t ui f sx" id="g_n1a" style="left:411px;top:431.50px;font-size:11px;transform:scaleX(0.7879);transform-origin:0 0;">テスト</span><span class="t ui" style="left:437px;top:431.50px;width:9px;overflow:hidden;font-size:9px">　</span><span class="t ui f sx" id="g_n1b" style="left:446px;top:431.50px;font-size:11px;transform:scaleX(0.9773);transform-origin:0 0;">部下</span><span class="t ui" style="left:469px;top:431.50px;font-size:11px;width:12px;text-align:center;transform:scaleX(.92)">１</span>
<span class="t ui f sx" id="g_n2a" style="left:411px;top:449.70px;font-size:11px;transform:scaleX(0.7879);transform-origin:0 0;">テスト</span><span class="t ui" style="left:437px;top:449.70px;width:9px;overflow:hidden;font-size:9px">　</span><span class="t ui f sx" id="g_n2b" style="left:446px;top:449.70px;font-size:11px;transform:scaleX(0.9773);transform-origin:0 0;">部下</span><span class="t ui" style="left:469px;top:449.70px;font-size:11px;width:12px;text-align:center;transform:scaleX(.92)">２</span>
<span class="t ui f sx" id="g_n3a" style="left:411px;top:467.50px;font-size:11px;transform:scaleX(0.7879);transform-origin:0 0;">テスト</span><span class="t ui" style="left:437px;top:467.50px;width:9px;overflow:hidden;font-size:9px">　</span><span class="t ui f sx" id="g_n3b" style="left:446px;top:467.50px;font-size:11px;transform:scaleX(0.9773);transform-origin:0 0;">部下</span><span class="t ui" style="left:469px;top:467.50px;font-size:11px;width:12px;text-align:center;transform:scaleX(.92)">５</span>
<span class="t f sx" id="g_d1" style="left:633px;top:432.600px;font-size:10.400px;color:#2a2a2a;transform:scaleX(0.9770);transform-origin:0 0;">1984/09/30 0:00:00</span>
<span class="t f sx" id="g_d2" style="left:633px;top:450.600px;font-size:10.400px;color:#2a2a2a;transform:scaleX(0.9770);transform-origin:0 0;">1991/01/06 0:00:00</span>
<span class="t f sx" id="g_d3" style="left:633px;top:468.600px;font-size:10.400px;color:#2a2a2a;transform:scaleX(0.9770);transform-origin:0 0;">1980/02/15 0:00:00</span>
<span class="t" style="left:890px;top:431.500px;width:23.500px;text-align:right;font-size:11px;color:#222;transform:scaleX(.85);transform-origin:100% 0">1</span>
<span class="t" style="left:890px;top:449.700px;width:23.500px;text-align:right;font-size:11px;color:#222;transform:scaleX(.85);transform-origin:100% 0">1</span>
<span class="t" style="left:890px;top:467.500px;width:23.500px;text-align:right;font-size:11px;color:#222;transform:scaleX(.85);transform-origin:100% 0">1</span>
<!-- grid v scrollbar -->
<div class="a" style="left:1007px;top:412px;width:15px;height:147px;background:#f0f0f0"></div>
<div class="a" style="left:1007px;top:429px;width:13.500px;height:68px;background:#cdcdcd"></div>
<div class="a" style="left:213px;top:559px;width:810px;height:1px;background:#8a8a8a"></div>
<svg class="a" style="left:1006px;top:411px" width="17" height="149" viewBox="0 0 17 149" fill="none" stroke="#505050" stroke-width="1.300"><path d="M4.800 11.800l3.400-3.500 3.400 3.500"/><path d="M4.800 137.500l3.400 3.500 3.400-3.500"/></svg>
<!-- status bar -->
<div class="a" style="left:1px;top:559.500px;width:1022px;height:1px;background:#e2dcdc"></div>
<span class="t f sx" id="s_pos" style="left:611px;top:561px;font-size:11.500px;transform:scaleX(0.8196);transform-origin:0 0;">(9, 1)</span>
<span class="t ui f sx" id="s_sep" style="left:881px;top:561px;font-size:11.500px;transform:scaleX(0.9048);transform-origin:0 0;">SQL区切り : ";"</span>
<div class="a" style="left:605px;top:562px;width:1px;height:14px;background:#dcdcdc"></div>
<div class="a" style="left:741px;top:562px;width:1px;height:14px;background:#dcdcdc"></div>
<div class="a" style="left:876px;top:562px;width:1px;height:14px;background:#dcdcdc"></div>
<!-- size grip -->
<svg class="a" style="left:1010px;top:565px" width="13" height="12" viewBox="0 0 13 12" fill="#c0c0c0"><rect x="9" y="2" width="1.500" height="1.500"/><rect x="6" y="5" width="1.500" height="1.500"/><rect x="9" y="5" width="1.500" height="1.500"/><rect x="3" y="8" width="1.500" height="1.500"/><rect x="6" y="8" width="1.500" height="1.500"/><rect x="9" y="8" width="1.500" height="1.500"/></svg>
<div class="a" id="win"></div>
</body>
</html>
